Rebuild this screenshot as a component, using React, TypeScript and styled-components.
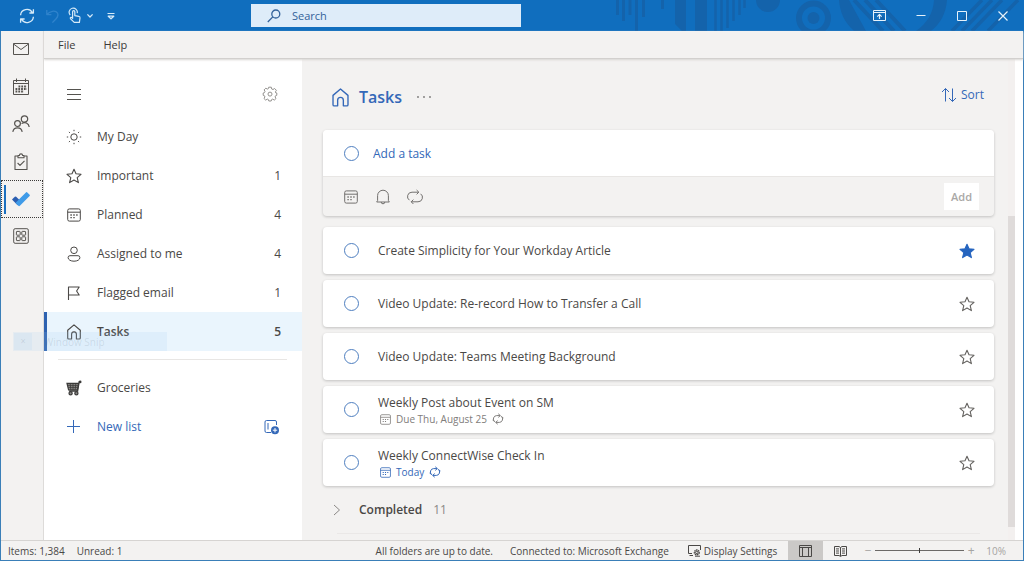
import React, { useState } from "react";
import styled, { createGlobalStyle, css } from "styled-components";

const GlobalStyle = createGlobalStyle`
  *, *::before, *::after { box-sizing: border-box; }
  body {
    margin: 0;
    font-family: "Open Sans", "Noto Sans", sans-serif;
    font-size: 12px;
    line-height: 16px;
    color: #4a4846;
    background: #f3f2f1;
  }
  button, input { font: inherit; color: inherit; }
  button { border: 0; padding: 0; background: none; cursor: pointer; }
  svg { display: block; flex: none; }
`;

/* ---------- icons ---------- */

const Stroke = styled.svg<{ $w?: number }>`
  fill: none;
  stroke: currentColor;
  stroke-width: ${(p) => p.$w ?? 1};
  stroke-linejoin: round;
`;

type IconProps = { size?: number };

const CalendarIcon = ({ size = 14 }: IconProps) => (
  <Stroke width={size} height={size} viewBox="0 0 14 14">
    <rect x="0.7" y="0.9" width="12.6" height="12.2" rx="1.6" />
    <path d="M0.7 4.2H13.3" />
    <path d="M3.4 7H4.8M6.3 7H7.7M9.2 7H10.6M3.4 9.6H4.8M6.3 9.6H7.7" strokeWidth="1.3" />
  </Stroke>
);

const HomeIcon = ({ size = 16 }: IconProps) => (
  <Stroke width={size} height={size} viewBox="0 0 16 16" $w={1.15}>
    <path d="M1.7 6.2L8 0.9L14.3 6.2V14a1 1 0 0 1-1 1H10.4V10.3a2.4 2.4 0 0 0-4.8 0V15H2.7a1 1 0 0 1-1-1Z" />
  </Stroke>
);

const StarIcon = ({ filled }: { filled?: boolean }) => (
  <Stroke width="16" height="16" viewBox="0 0 16 16" $w={1.1}>
    <path
      d="M8 1.2L10 5.8L15 6.3L11.2 9.6L12.4 14.6L8 12L3.6 14.6L4.8 9.6L1 6.3L6 5.8Z"
      fill={filled ? "currentColor" : "none"}
    />
  </Stroke>
);

const RepeatIcon = () => (
  <Stroke width="16" height="16" viewBox="0 0 16 16">
    <path d="M9.6 1L11.8 3.2L9.6 5.4M11.8 3.2H5A4.4 4.4 0 0 0 2.4 11.2M6.4 15L4.2 12.8L6.4 10.6M4.2 12.8H11A4.4 4.4 0 0 0 13.6 4.8" />
  </Stroke>
);

const RecurIcon = () => (
  <Stroke width="12" height="12" viewBox="0 0 12 12">
    <path d="M6.3 0.8L8.3 2.6L6.3 4.4M8.3 2.6H4.6A3.4 3.4 0 0 0 2.6 8.6M0.6 6.8L2.6 8.8M5.7 11.2L3.7 9.4L5.7 7.6M3.7 9.4H7.4A3.4 3.4 0 0 0 9.4 3.4M11.4 5.2L9.6 3.4" />
  </Stroke>
);

const SunIcon = () => (
  <Stroke width="16" height="16" viewBox="0 0 16 16">
    <circle cx="8" cy="8" r="3.2" />
    <path d="M8 0.8V2.2M8 13.8V15.2M0.8 8H2.2M13.8 8H15.2M2.9 2.9L3.9 3.9M12.1 12.1L13.1 13.1M2.9 13.1L3.9 12.1M12.1 3.9L13.1 2.9" />
  </Stroke>
);

const PersonIcon = () => (
  <Stroke width="16" height="16" viewBox="0 0 16 16">
    <circle cx="8" cy="4.3" r="3.3" />
    <path d="M4 9.7h8a1.9 1.9 0 0 1 1.9 1.9c0 2.2-2.6 3.6-5.9 3.6s-5.9-1.4-5.9-3.6A1.9 1.9 0 0 1 4 9.7Z" />
  </Stroke>
);

const FlagIcon = () => (
  <Stroke width="16" height="16" viewBox="0 0 16 16" $w={1.1}>
    <path d="M2.5 15V2H13.2L10.6 6L13.2 10H2.5" />
  </Stroke>
);

const CartIcon = () => (
  <svg width="16" height="16" viewBox="0 0 16 16">
    <path d="M15 1.6H13.2L11.6 11H3.2" fill="none" stroke="#3b3a39" strokeWidth="1.3" />
    <path d="M1 3.4H12.6L11.4 9.8H2.6Z" fill="#8b8988" stroke="#3b3a39" strokeWidth="1.2" />
    <path d="M1.8 5.4H12.2M2.2 7.4H11.8M4.2 3.4L4.8 9.8M7 3.4V9.8M9.8 3.4L9.2 9.8" stroke="#3b3a39" strokeWidth="0.8" />
    <circle cx="14.2" cy="1.9" r="1.3" fill="#3b3a39" />
    <circle cx="4.6" cy="13.2" r="1.6" fill="#8b8988" stroke="#3b3a39" strokeWidth="1.2" />
    <circle cx="10.4" cy="13.2" r="1.6" fill="#8b8988" stroke="#3b3a39" strokeWidth="1.2" />
  </svg>
);

const PlusIcon = () => (
  <Stroke width="16" height="16" viewBox="0 0 16 16">
    <path d="M7.5 1V14M1 7.5H14" />
  </Stroke>
);

const NewGroupIcon = () => (
  <Stroke width="16" height="16" viewBox="0 0 16 16">
    <path d="M7 13.5H2.5a1.5 1.5 0 0 1-1.5-1.5V3a1.5 1.5 0 0 1 1.5-1.5H11A1.5 1.5 0 0 1 12.5 3V6M4 4V10.5" />
    <circle cx="11" cy="11.2" r="4" fill="currentColor" stroke="none" />
    <path d="M11 9V13.4M8.8 11.2H13.2" stroke="#ffffff" />
  </Stroke>
);

const MenuIcon = () => (
  <Stroke width="16" height="16" viewBox="0 0 16 16">
    <path d="M1 3.5H15M1 8.5H15M1 13.5H15" />
  </Stroke>
);

const GearIcon = () => (
  <Stroke width="16" height="16" viewBox="0 0 16 16">
    <path d="M6.7 1.2H9.3L9.7 3L11 3.5L12.6 2.5L14.4 4.3L13.4 5.9L13.9 7H14.8V9.3L13.5 9.8L13.1 10.9L14 12.5L12.3 14.1L10.7 13.1L9.6 13.6L9.2 15H6.8L6.4 13.6L5.3 13.1L3.7 14.1L2 12.5L2.9 10.9L2.5 9.8L1.2 9.3V7L2.5 6.6L3 5.4L2.1 3.9L3.8 2.2L5.3 3.1L6.3 2.7Z" />
    <circle cx="8" cy="8.1" r="2" />
  </Stroke>
);

const BellIcon = () => (
  <Stroke width="16" height="16" viewBox="0 0 16 16">
    <path d="M2.6 11.5V6.6a5.4 5.4 0 0 1 10.8 0V11.5L14.3 13H1.7ZM6.2 13a1.8 1.8 0 0 0 3.6 0" />
  </Stroke>
);

const SortIcon = () => (
  <Stroke width="16" height="16" viewBox="0 0 16 16">
    <path d="M4.5 14.5V1.5M1 5L4.5 1.5L8 5M11.5 1.5V14.5M8 11L11.5 14.5L15 11" />
  </Stroke>
);

const ChevronIcon = () => (
  <Stroke width="8" height="12" viewBox="0 0 8 12">
    <path d="M1 1L6.5 6L1 11" />
  </Stroke>
);

const MailIcon = () => (
  <Stroke width="18" height="18" viewBox="0 0 18 18">
    <path d="M1.5 2.5H16.5V13.5H1.5ZM1.5 3L9 8.5L16.5 3" />
  </Stroke>
);

const RailCalendarIcon = () => (
  <Stroke width="18" height="18" viewBox="0 0 18 18">
    <path d="M1.5 2.5H16.5V16.5H1.5ZM1.5 5.5H16.5M4.5 0.5V4M13.5 0.5V4" />
    <path d="M6.5 8.5H15M3.5 11H15M3.5 13.5H12" strokeWidth="1.8" strokeDasharray="1.8 1" />
  </Stroke>
);

const PeopleIcon = () => (
  <Stroke width="18" height="18" viewBox="0 0 18 18" $w={1.2}>
    <circle cx="5.5" cy="8.6" r="2.9" />
    <circle cx="12.5" cy="4" r="3.2" />
    <path d="M0.8 16.8a4.8 4.8 0 0 1 9.4 0M9.6 8.6a4.7 4.7 0 0 1 7.6 3.4" />
  </Stroke>
);

const ClipboardIcon = () => (
  <Stroke width="18" height="18" viewBox="0 0 18 18" $w={1.1}>
    <path d="M6 3H3V16.5H15V3H12M6 4.8V2.5H7.4a1.6 1.6 0 0 1 3.2 0H12V4.8ZM5.6 10L8 12.4L12.5 7.8" />
  </Stroke>
);

const TodoIcon = () => (
  <svg width="20" height="16" viewBox="0 0 20 16">
    <path d="M1 8.6L3.8 5.8a1 1 0 0 1 1.4 0L10 10.6L6.6 14.2Z" fill="#2b5eb0" />
    <path d="M4.6 11.8L14.9 1.4a1 1 0 0 1 1.4 0L18.6 3.7a.8.8 0 0 1 0 1.2L8.9 14.8a1.2 1.2 0 0 1-1.6 0Z" fill="#3f9be8" />
  </svg>
);

const AppsIcon = () => (
  <Stroke width="16" height="16" viewBox="0 0 16 16">
    <rect x="0.7" y="0.7" width="14.6" height="14.6" rx="1.4" />
    <rect x="3.4" y="3.4" width="3.8" height="3.8" rx="0.6" />
    <rect x="8.8" y="3.4" width="3.8" height="3.8" rx="0.6" />
    <rect x="3.4" y="8.8" width="3.8" height="3.8" rx="0.6" />
    <rect x="8.8" y="8.8" width="3.8" height="3.8" rx="0.6" />
  </Stroke>
);

const SyncIcon = () => (
  <Stroke width="18" height="16" viewBox="0 0 18 16" $w={1.3}>
    <path d="M2.6 7.2A6.3 6 0 0 1 14.4 4.6M15.4 1.2V5H11.4M15.4 8.8A6.3 6 0 0 1 3.6 11.4M2.6 14.8V11H6.6" />
  </Stroke>
);

const UndoIcon = () => (
  <Stroke width="16" height="16" viewBox="0 0 16 16" $w={1.3}>
    <path d="M1.8 2V6.6H6.4M1.8 6.6C4.6 3 10.4 1.8 12.6 5.2C14.4 8.4 11 11 7.4 14.6" />
  </Stroke>
);

const TouchIcon = () => (
  <Stroke width="14" height="17" viewBox="0 0 14 17" $w={1.2}>
    <path d="M2.2 8A4.1 4.1 0 1 1 9.2 6.2" />
    <path d="M4.6 11.4V4.8a1.1 1.1 0 0 1 2.2 0V8.6L10.8 9.4a1.4 1.4 0 0 1 1.2 1.5L11.4 15.4H6.2L2.4 11.6C2 10.8 3 10 3.8 10.6Z" />
  </Stroke>
);

const SmallChevron = () => (
  <Stroke width="8" height="6" viewBox="0 0 8 6" $w={1.3}>
    <path d="M1.4 1.4L4 4L6.6 1.4" />
  </Stroke>
);

const CustomizeIcon = () => (
  <Stroke width="8" height="8" viewBox="0 0 8 8" $w={1.2}>
    <path d="M0.5 1.5H7.5M1.2 4.2L4 6.8L6.8 4.2Z" />
  </Stroke>
);

const SearchIcon = () => (
  <Stroke width="14" height="14" viewBox="0 0 14 14" $w={1.3}>
    <circle cx="8.8" cy="5" r="4" />
    <path d="M5.8 7.9L0.8 13" />
  </Stroke>
);

const RibbonIcon = () => (
  <Stroke width="13" height="11" viewBox="0 0 13 11">
    <path d="M0.5 0.5H12.5V10.5H0.5ZM0.5 2.5H12.5" />
    <path d="M6.5 9V4.6M4.3 6.6L6.5 4.4L8.7 6.6" strokeWidth="1.2" />
  </Stroke>
);

const MinimizeIcon = () => (
  <Stroke width="10" height="10" viewBox="0 0 10 10">
    <path d="M0.5 4.5H9.5" />
  </Stroke>
);

const MaximizeIcon = () => (
  <Stroke width="10" height="10" viewBox="0 0 10 10">
    <rect x="0.5" y="0.5" width="9" height="9" />
  </Stroke>
);

const CloseIcon = () => (
  <Stroke width="10" height="10" viewBox="0 0 10 10" $w={1.2}>
    <path d="M0.5 0.5L9.5 9.5M9.5 0.5L0.5 9.5" />
  </Stroke>
);

const DisplayIcon = () => (
  <Stroke width="14" height="12" viewBox="0 0 14 12">
    <path d="M4 8.5H0.5V0.5H12.5V5M1.5 10.5H5" />
    <circle cx="8.8" cy="7.4" r="2.4" strokeWidth="1.4" strokeDasharray="1.4 .5" />
    <circle cx="8.8" cy="7.4" r="1.2" />
    <path d="M7 11.2H12" />
  </Stroke>
);

const NormalViewIcon = () => (
  <Stroke width="13" height="12" viewBox="0 0 13 12">
    <path d="M0.5 0.5H12.5V11.5H0.5ZM0.5 2.5H12.5M3.5 2.5V11.5M9.5 2.5V11.5" />
  </Stroke>
);

const ReadingViewIcon = () => (
  <Stroke width="13" height="12" viewBox="0 0 13 12">
    <path d="M0.5 1.5H5L6.5 2.5L8 1.5H12.5V10.5H8L6.5 11.5L5 10.5H0.5ZM6.5 2.5V11" />
    <path d="M2 3.9H5M2 6H5M2 8.1H5M8 3.9H11M8 6H11M8 8.1H11" />
  </Stroke>
);

const MoreIcon = () => (
  <svg width="14" height="4" viewBox="0 0 14 4" fill="currentColor">
    <circle cx="1" cy="2" r="0.9" />
    <circle cx="7" cy="2" r="0.9" />
    <circle cx="13" cy="2" r="0.9" />
  </svg>
);

/* ---------- window frame and title bar ---------- */

const Window = styled.div`
  position: relative;
  display: flex;
  flex-direction: column;
  min-height: 100vh;
  border: solid #3a7fb8;
  border-width: 0 1px 1px;
`;

const TitleBar = styled.header`
  position: relative;
  display: flex;
  align-items: center;
  height: 31px;
  margin: 0 -1px;
  background: #106ebe;
  color: #d6eaf8;
`;

const Pattern = styled.svg`
  position: absolute;
  top: 0;
  right: 0;
  fill: #1463ab;
  stroke: #1463ab;
`;

const QuickAccess = styled.div`
  position: relative;
  display: flex;
  align-items: center;
  flex: 0 1 251px;
  padding-left: 18px;
  gap: 9px;
`;

const QuickButton = styled.button<{ $faint?: boolean }>`
  color: ${(p) => (p.$faint ? "#2f83cc" : "#d6eaf8")};
`;

const QuickPair = styled.div`
  display: flex;
  align-items: center;
  gap: 4px;
  margin: 0 4px 0 -2px;
`;

const SearchBox = styled.label`
  position: relative;
  display: flex;
  align-items: center;
  gap: 11px;
  flex: 0 1 270px;
  height: 23px;
  padding: 0 16px;
  background: #deecf9;
  color: #33629a;
  input {
    flex: 1;
    min-width: 0;
    padding: 0;
    border: 0;
    outline: 0;
    background: none;
    font-size: 11px;
  }
  input::placeholder { color: #33629a; opacity: 1; }
`;

const WindowControls = styled.div`
  position: relative;
  display: flex;
  margin: 0 1px 0 auto;
`;

const ControlButton = styled.button`
  display: grid;
  place-items: center;
  width: 41px;
  height: 31px;
  color: #e6f2fb;
`;

/* ---------- body ---------- */

const Body = styled.div`
  display: flex;
  flex: 1;
`;

const Rail = styled.nav`
  flex: none;
  width: 43px;
  border-right: 1px solid #dddbd9;
`;

const RailList = styled.div`
  display: grid;
  grid-auto-rows: 1fr;
  height: 224px;
`;

const RailButton = styled.button<{ $active?: boolean }>`
  display: flex;
  align-items: center;
  justify-content: center;
  padding-right: 2px;
  color: #55534f;
  ${(p) =>
    p.$active &&
    css`
      position: relative;
      outline: 1px dotted #3b3a39;
      outline-offset: -1px;
      &::before {
        content: "";
        position: absolute;
        left: 3px;
        top: 5px;
        bottom: 4px;
        width: 2px;
        background: #1a6fbf;
      }
    `}
`;

const Content = styled.div`
  display: flex;
  flex-direction: column;
  flex: 1;
  min-width: 0;
`;

const MenuBar = styled.nav`
  display: flex;
  align-items: center;
  gap: 28px;
  height: 28px;
  padding: 0 14px;
  border-bottom: 1px solid #d2d0ce;
  box-shadow: 0 1px 2px #d8d6d4;
  z-index: 1;
`;

const MenuButton = styled.button`
  font-size: 11px;
  color: #3b3a39;
`;

const Panes = styled.div`
  display: flex;
  flex: 1;
  background: #ffffff;
`;

/* ---------- list sidebar ---------- */

const Sidebar = styled.aside`
  flex: none;
  width: 258px;
  background: #ffffff;
`;

const SidebarHead = styled.div`
  display: flex;
  justify-content: space-between;
  align-items: center;
  height: 58px;
  padding: 12px 24px 0 22px;
`;

const HeadButton = styled.button<{ $tone?: "soft" | "accent" }>`
  color: ${(p) =>
    p.$tone === "accent" ? "#3468b8" : p.$tone === "soft" ? "#94928f" : "#55534f"};
`;

const ListRow = styled.a<{ $active?: boolean }>`
  display: flex;
  align-items: center;
  gap: 15px;
  height: 39px;
  padding: 0 21px 0 19px;
  border-left: 3px solid ${(p) => (p.$active ? "#2e62b0" : "transparent")};
  background: ${(p) => (p.$active ? "#eaf5fd" : "transparent")};
  font-weight: ${(p) => (p.$active ? 600 : 400)};
  color: #4a4846;
  text-decoration: none;
`;

const IconSlot = styled.span`
  display: grid;
  place-items: center;
  width: 16px;
`;

const RowName = styled.span`
  flex: 1;
`;

const Divider = styled.hr`
  height: 1px;
  margin: 8px 15px 8px 14px;
  border: 0;
  background: #e8e6e4;
`;

const AddRow = styled.div`
  display: flex;
  align-items: center;
  height: 39px;
  padding: 0 22px;
`;

const AddListButton = styled.button`
  display: flex;
  align-items: center;
  gap: 15px;
  flex: 1;
  color: #3468b8;
`;

/* ---------- task pane ---------- */

const Main = styled.main`
  flex: 1;
  min-width: 0;
  padding: 0 14px 0 21px;
  background: #f3f2f1;
`;

const MainHead = styled.div`
  display: flex;
  align-items: center;
  height: 71px;
  padding: 5px 10px 0 8px;
  color: #3468b8;
`;

const Title = styled.h1`
  margin: 0 15px 0 9px;
  font-size: 16px;
  line-height: 24px;
  font-weight: 600;
`;

const MoreButton = styled.button`
  color: #7a7876;
`;

const SortButton = styled.button`
  display: flex;
  align-items: center;
  gap: 4px;
  margin: -4px 0 0 auto;
`;

const cardShadow = css`
  border-radius: 4px;
  box-shadow: 0 1px 3px rgba(0, 0, 0, 0.2);
`;

const AddCard = styled.form`
  ${cardShadow}
  margin-bottom: 11px;
  overflow: hidden;
`;

const AddLine = styled.div`
  display: flex;
  align-items: center;
  gap: 14px;
  height: 46px;
  padding: 0 21px;
  background: #ffffff;
  input[type="text"] {
    flex: 1;
    padding: 1px 0 0;
    border: 0;
    outline: 0;
    background: none;
  }
  input::placeholder { color: #3468b8; opacity: 1; }
`;

const AddTools = styled.div`
  display: flex;
  align-items: center;
  gap: 16px;
  height: 40px;
  padding: 0 15px 0 20px;
  border-top: 1px solid #e8e6e4;
`;

const ToolButton = styled.button`
  display: grid;
  place-items: center;
  width: 16px;
  height: 16px;
  color: #72706e;
`;

const AddButton = styled.button`
  width: 35px;
  height: 27px;
  margin-left: auto;
  background: #ffffff;
  font-size: 11px;
  font-weight: 600;
  color: #aaa8a6;
`;

const RoundCheck = styled.input`
  appearance: none;
  flex: none;
  width: 15px;
  height: 15px;
  margin: 0;
  border: 1px solid #4f7fc0;
  border-radius: 50%;
  background: #ffffff;
  &:checked { background: #3468b8; }
`;

const TaskList = styled.ul`
  display: grid;
  gap: 6px;
  margin: 0;
  padding: 0;
  list-style: none;
`;

const TaskCard = styled.li`
  ${cardShadow}
  display: flex;
  align-items: center;
  gap: 19px;
  height: 47px;
  padding: 0 19px 0 21px;
  background: #ffffff;
`;

const TaskText = styled.div<{ $detailed?: boolean }>`
  flex: 1;
  min-width: 0;
  padding-top: ${(p) => (p.$detailed ? "3px" : "0")};
`;

const TaskMeta = styled.div<{ $today?: boolean }>`
  display: flex;
  align-items: center;
  gap: 5px;
  padding-left: 2px;
  font-size: 10px;
  color: ${(p) => (p.$today ? "#3468b8" : "#7f7d7b")};
`;

const StarButton = styled.button<{ $on?: boolean }>`
  color: ${(p) => (p.$on ? "#2564bf" : "#64625f")};
`;

const Completed = styled.button`
  display: flex;
  align-items: center;
  height: 47px;
  padding: 0 10px;
  color: #8a8886;
`;

const CompletedName = styled.span`
  margin: 0 11px 0 18px;
  font-weight: 600;
  color: #4a4846;
`;

const ListEnd = styled.hr`
  height: 1px;
  margin: 0 14px;
  border: 0;
  background: #eae8e7;
`;

const ScrollTrack = styled.div`
  display: flex;
  flex-direction: column;
  flex: none;
  width: 7px;
  background: #f3f0ef;
`;

const ScrollPart = styled.div<{ $grow: number; $thumb?: boolean }>`
  flex: ${(p) => p.$grow} 0 0;
  background: ${(p) => (p.$thumb ? "#dfdbda" : "transparent")};
`;

const Gutter = styled.div`
  flex: none;
  width: 8px;
`;

/* ---------- status bar ---------- */

const StatusBar = styled.footer`
  display: flex;
  align-items: center;
  height: 20px;
  padding: 0 17px 0 7px;
  border-top: 1px solid #d6d4d2;
  background: #f3f2f1;
  font-size: 10px;
  white-space: nowrap;
`;

const StatusGroup = styled.div<{ $right?: boolean }>`
  display: flex;
  align-items: center;
  gap: ${(p) => (p.$right ? "17px" : "12px")};
  margin-left: ${(p) => (p.$right ? "auto" : "0")};
`;

const DisplayButton = styled.button`
  display: flex;
  align-items: center;
  gap: 2px;
  margin: 0 11px 0 2px;
`;

const ViewButton = styled.button<{ $active?: boolean }>`
  display: grid;
  place-items: center;
  width: 35px;
  height: 19px;
  background: ${(p) => (p.$active ? "#cbc9c7" : "transparent")};
`;

const Zoom = styled.div`
  display: flex;
  align-items: center;
  gap: 3px;
  margin-left: 6px;
  color: #a6a4a2;
`;

const ZoomStep = styled.button`
  width: 8px;
  font-size: 12px;
`;

const ZoomRange = styled.input`
  appearance: none;
  width: 89px;
  height: 9px;
  margin: 0;
  background: linear-gradient(#6b6967, #6b6967) center / 100% 1px no-repeat;
  &::-webkit-slider-thumb {
    appearance: none;
    width: 1px;
    height: 5px;
    background: #3b3a39;
  }
`;

const ZoomValue = styled.span`
  margin-left: 8px;
`;

/* Fading menu entry left over from the snipping tool */
const FadingMenu = styled.div`
  position: absolute;
  left: 12px;
  top: 332px;
  display: flex;
  align-items: center;
  gap: 12px;
  width: 154px;
  height: 19px;
  padding-left: 1px;
  background: rgba(160, 205, 240, 0.16);
  color: rgba(80, 100, 120, 0.16);
  font-size: 10px;
  pointer-events: none;
  z-index: 2;
`;

const FadingMark = styled.span`
  width: 18px;
  height: 17px;
  background: rgba(160, 205, 240, 0.16);
  text-align: center;
`;

/* ---------- data ---------- */

const lists = [
  { name: "My Day", icon: <SunIcon /> },
  { name: "Important", icon: <StarIcon />, count: 1 },
  { name: "Planned", icon: <CalendarIcon />, count: 4 },
  { name: "Assigned to me", icon: <PersonIcon />, count: 4 },
  { name: "Flagged email", icon: <FlagIcon />, count: 1 },
  { name: "Tasks", icon: <HomeIcon />, count: 5, active: true },
];

const tasks = [
  { title: "Create Simplicity for Your Workday Article", starred: true },
  { title: "Video Update: Re-record How to Transfer a Call" },
  { title: "Video Update: Teams Meeting Background" },
  { title: "Weekly Post about Event on SM", due: "Due Thu, August 25" },
  { title: "Weekly ConnectWise Check In", due: "Today", today: true },
];

const railItems = [
  { name: "Mail", icon: <MailIcon /> },
  { name: "Calendar", icon: <RailCalendarIcon /> },
  { name: "People", icon: <PeopleIcon /> },
  { name: "Tasks", icon: <ClipboardIcon /> },
  { name: "To Do", icon: <TodoIcon />, active: true },
  { name: "More apps", icon: <AppsIcon /> },
];

const TitlePattern = () => (
  <Pattern width="424" height="31" viewBox="0 0 424 31" aria-hidden="true">
    <path
      d="M17.5 0V15M23.5 0V21M30 0V15M36.5 0V31M43.5 0V17M62.5 0V9"
      fill="none"
      strokeWidth="3"
    />
    <path d="M75 0H86V31H82L75 24ZM95 0H107V31H95Z" stroke="none" />
    <path
      d="M115.5 0V31M121.5 0V31M127.5 0V28M133.5 0V21M139.5 0V15M144.5 0V8"
      fill="none"
      strokeWidth="2.5"
    />
    <path d="M156 0H180A12 12 0 0 1 156 0Z" stroke="none" />
    <circle cx="213.5" cy="18" r="14.5" fill="none" strokeWidth="6" />
    <circle cx="213.5" cy="18" r="6" stroke="none" />
    <path d="M239 0H249L266 31H254C244 22 240 12 239 0Z" stroke="none" />
    <path d="M254 0L283 31M265 0L294 31M276 0L305 31" fill="none" strokeWidth="4" />
    <path d="M334 0H347C346 14 340 24 331 31H316C327 23 333 14 334 0Z" stroke="none" />
    <path d="M352 31L382 0M362 31L392 0M372 31L402 0M388 31L418 0" fill="none" strokeWidth="3.5" />
  </Pattern>
);

export default function App() {
  const [draft, setDraft] = useState("");
  return (
    <Window>
      <GlobalStyle />
      <TitleBar>
        <TitlePattern />
        <QuickAccess>
          <QuickButton aria-label="Send and receive"><SyncIcon /></QuickButton>
          <QuickButton $faint aria-label="Undo"><UndoIcon /></QuickButton>
          <QuickPair>
            <QuickButton aria-label="Touch mode"><TouchIcon /></QuickButton>
            <QuickButton aria-label="Touch mode options"><SmallChevron /></QuickButton>
          </QuickPair>
          <QuickButton aria-label="Customize toolbar"><CustomizeIcon /></QuickButton>
        </QuickAccess>
        <SearchBox>
          <SearchIcon />
          <input type="search" placeholder="Search" aria-label="Search" />
        </SearchBox>
        <WindowControls>
          <ControlButton aria-label="Ribbon display"><RibbonIcon /></ControlButton>
          <ControlButton aria-label="Minimize"><MinimizeIcon /></ControlButton>
          <ControlButton aria-label="Maximize"><MaximizeIcon /></ControlButton>
          <ControlButton aria-label="Close"><CloseIcon /></ControlButton>
        </WindowControls>
      </TitleBar>

      <Body>
        <Rail>
          <RailList>
            {railItems.map((item) => (
              <RailButton key={item.name} aria-label={item.name} $active={item.active}>
                {item.icon}
              </RailButton>
            ))}
          </RailList>
        </Rail>

        <Content>
          <MenuBar>
            <MenuButton>File</MenuButton>
            <MenuButton>Help</MenuButton>
          </MenuBar>

          <Panes>
            <Sidebar>
              <SidebarHead>
                <HeadButton aria-label="Collapse sidebar"><MenuIcon /></HeadButton>
                <HeadButton $tone="soft" aria-label="Settings"><GearIcon /></HeadButton>
              </SidebarHead>
              {lists.map((list) => (
                <ListRow key={list.name} href="#" $active={list.active}>
                  <IconSlot>{list.icon}</IconSlot>
                  <RowName>{list.name}</RowName>
                  {list.count && <span>{list.count}</span>}
                </ListRow>
              ))}
              <Divider />
              <ListRow href="#">
                <IconSlot><CartIcon /></IconSlot>
                <RowName>Groceries</RowName>
              </ListRow>
              <AddRow>
                <AddListButton>
                  <PlusIcon />
                  New list
                </AddListButton>
                <HeadButton $tone="accent" aria-label="New group"><NewGroupIcon /></HeadButton>
              </AddRow>
            </Sidebar>

            <Main>
              <MainHead>
                <HomeIcon size={19} />
                <Title>Tasks</Title>
                <MoreButton aria-label="List options"><MoreIcon /></MoreButton>
                <SortButton>
                  <SortIcon />
                  Sort
                </SortButton>
              </MainHead>

              <AddCard onSubmit={(e) => e.preventDefault()}>
                <AddLine>
                  <RoundCheck type="checkbox" aria-label="New task completed" />
                  <input
                    type="text"
                    placeholder="Add a task"
                    aria-label="Add a task"
                    value={draft}
                    onChange={(e) => setDraft(e.target.value)}
                  />
                </AddLine>
                <AddTools>
                  <ToolButton type="button" aria-label="Add due date"><CalendarIcon /></ToolButton>
                  <ToolButton type="button" aria-label="Remind me"><BellIcon /></ToolButton>
                  <ToolButton type="button" aria-label="Repeat"><RepeatIcon /></ToolButton>
                  <AddButton type="submit">Add</AddButton>
                </AddTools>
              </AddCard>

              <TaskList>
                {tasks.map((task, i) => (
                  <TaskCard key={task.title}>
                    <RoundCheck type="checkbox" id={`task-${i}`} />
                    <TaskText $detailed={Boolean(task.due)}>
                      <label htmlFor={`task-${i}`}>{task.title}</label>
                      {task.due && (
                        <TaskMeta $today={task.today}>
                          <CalendarIcon size={11} />
                          {task.due}
                          <RecurIcon />
                        </TaskMeta>
                      )}
                    </TaskText>
                    <StarButton $on={task.starred} aria-label="Mark as important">
                      <StarIcon filled={task.starred} />
                    </StarButton>
                  </TaskCard>
                ))}
              </TaskList>

              <Completed>
                <ChevronIcon />
                <CompletedName>Completed</CompletedName>
                11
              </Completed>
              <ListEnd />
            </Main>
            <ScrollTrack>
              <ScrollPart $grow={157} />
              <ScrollPart $grow={311} $thumb />
              <ScrollPart $grow={13} />
            </ScrollTrack>
            <Gutter />
          </Panes>
        </Content>
      </Body>

      <StatusBar>
        <StatusGroup>
          <span>Items: 1,384</span>
          <span>Unread: 1</span>
        </StatusGroup>
        <StatusGroup $right>
          <span>All folders are up to date.</span>
          <span>Connected to: Microsoft Exchange</span>
          <DisplayButton>
            <DisplayIcon />
            Display Settings
          </DisplayButton>
        </StatusGroup>
        <ViewButton $active aria-label="Normal view"><NormalViewIcon /></ViewButton>
        <ViewButton aria-label="Reading view"><ReadingViewIcon /></ViewButton>
        <Zoom>
          <ZoomStep aria-label="Zoom out">−</ZoomStep>
          <ZoomRange type="range" aria-label="Zoom" defaultValue={50} />
          <ZoomStep aria-label="Zoom in">+</ZoomStep>
          <ZoomValue>10%</ZoomValue>
        </Zoom>
      </StatusBar>

      <FadingMenu>
        <FadingMark>×</FadingMark>
        Window Snip
      </FadingMenu>
    </Window>
  );
}
